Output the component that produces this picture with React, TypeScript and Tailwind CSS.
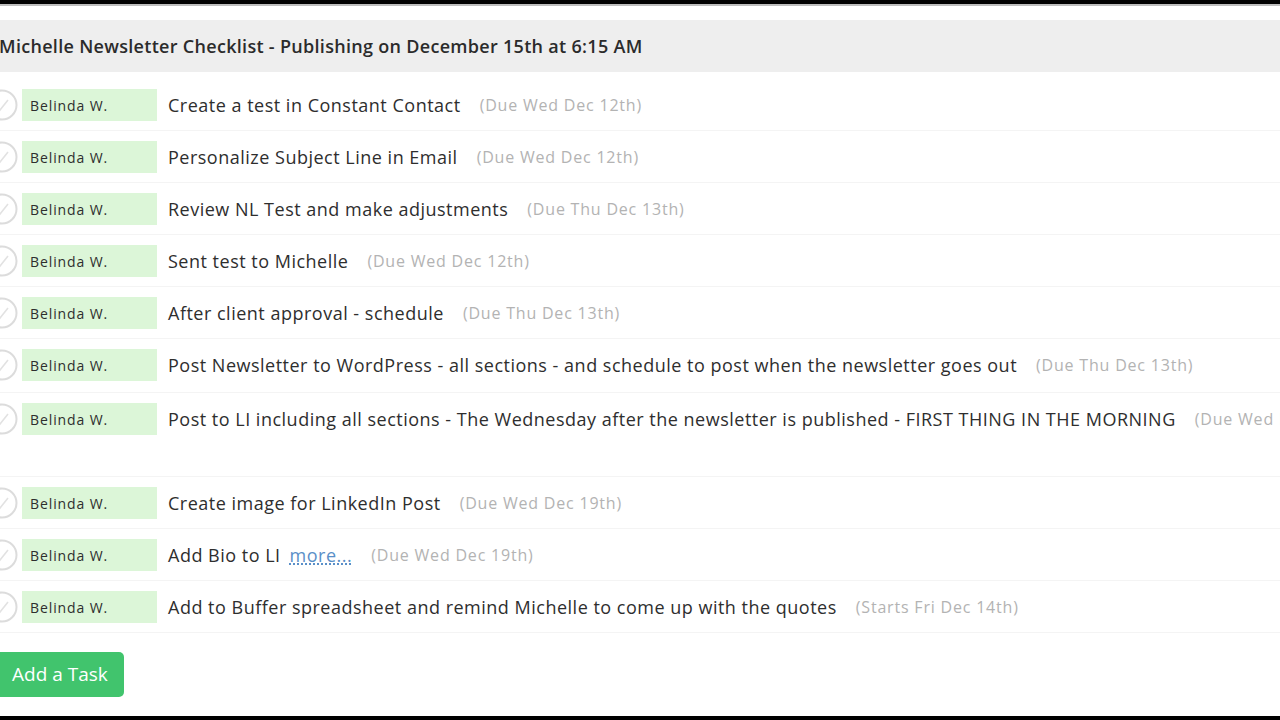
import React from "react";

type Task = { title: string; due: string; more?: boolean; tall?: boolean };

const tasks: Task[] = [
  { title: "Create a test in Constant Contact", due: "(Due Wed Dec 12th)" },
  { title: "Personalize Subject Line in Email", due: "(Due Wed Dec 12th)" },
  { title: "Review NL Test and make adjustments", due: "(Due Thu Dec 13th)" },
  { title: "Sent test to Michelle", due: "(Due Wed Dec 12th)" },
  { title: "After client approval - schedule", due: "(Due Thu Dec 13th)" },
  {
    title:
      "Post Newsletter to WordPress - all sections - and schedule to post when the newsletter goes out",
    due: "(Due Thu Dec 13th)",
  },
  {
    title:
      "Post to LI including all sections - The Wednesday after the newsletter is published - FIRST THING IN THE MORNING",
    due: "(Due Wed Dec 19th)",
    tall: true,
  },
  { title: "Create image for LinkedIn Post", due: "(Due Wed Dec 19th)" },
  { title: "Add Bio to LI", due: "(Due Wed Dec 19th)", more: true },
  {
    title: "Add to Buffer spreadsheet and remind Michelle to come up with the quotes",
    due: "(Starts Fri Dec 14th)",
  },
];

function Check() {
  return (
    <svg width="32" height="32" viewBox="0 0 32 32" className="shrink-0 -ml-[14px]">
      <circle cx="16" cy="16" r="14.5" fill="white" stroke="#dcdcdc" strokeWidth="2" />
      <path d="M10 17 L14 21 L22 11" fill="none" stroke="#e2e2e2" strokeWidth="1.6" />
    </svg>
  );
}

export default function App() {
  return (
    <div
      className="w-[1280px] h-[720px] overflow-hidden bg-white flex flex-col text-[#333]"
      style={{ fontFamily: '"Open Sans", "Liberation Sans", sans-serif' }}
    >
      <div className="h-[4px] bg-black shrink-0" />
      <div className="h-[2px] bg-[#bdbdbd] shrink-0" />
      <div className="h-[14px] shrink-0" />
      <div className="h-[52px] bg-[#eeeeee] shrink-0 flex items-center -ml-[1px] text-[18px] font-semibold text-[#2b2b2b] tracking-[0.3px] whitespace-nowrap">
        Michelle Newsletter Checklist - Publishing on December 15th at 6:15 AM
      </div>
      <div className="h-[7px] shrink-0" />
      <div className="flex flex-col">
        {tasks.map((t, i) => (
          <div
            key={i}
            className={`flex items-start border-b border-[#f4f4f4] pt-[10px] whitespace-nowrap ${
              t.tall ? "h-[84px]" : i === 5 ? "h-[54px]" : "h-[52px]"
            }`}
          >
            <Check />
            <div className="ml-[4px] w-[135px] h-[32px] shrink-0 bg-[#dcf6d8] flex items-center pl-[8px] text-[14px] tracking-[0.9px] text-[#2e2e2e]">
              Belinda W.
            </div>
            <div className="ml-[11px] h-[32px] flex items-center text-[18px] tracking-[0.5px] text-[#2e2e2e]">
              <span>{t.title}</span>
              {t.more && (
                <span className="ml-[9px] text-[#5a8fc8] underline decoration-dotted underline-offset-2">
                  more...
                </span>
              )}
              <span className="ml-[19px] text-[16px] tracking-[0.8px] text-[#b3b3b3]">{t.due}</span>
            </div>
          </div>
        ))}
      </div>
      <div className="h-[19px] shrink-0" />
      <div className="-ml-[6px] w-[130px] h-[45px] shrink-0 rounded-[5px] bg-[#41c46d] flex items-center pl-[18px] text-[19px] text-white">
        Add a Task
      </div>
      <div className="flex-1" />
      <div className="h-[4px] bg-black shrink-0" />
    </div>
  );
}
